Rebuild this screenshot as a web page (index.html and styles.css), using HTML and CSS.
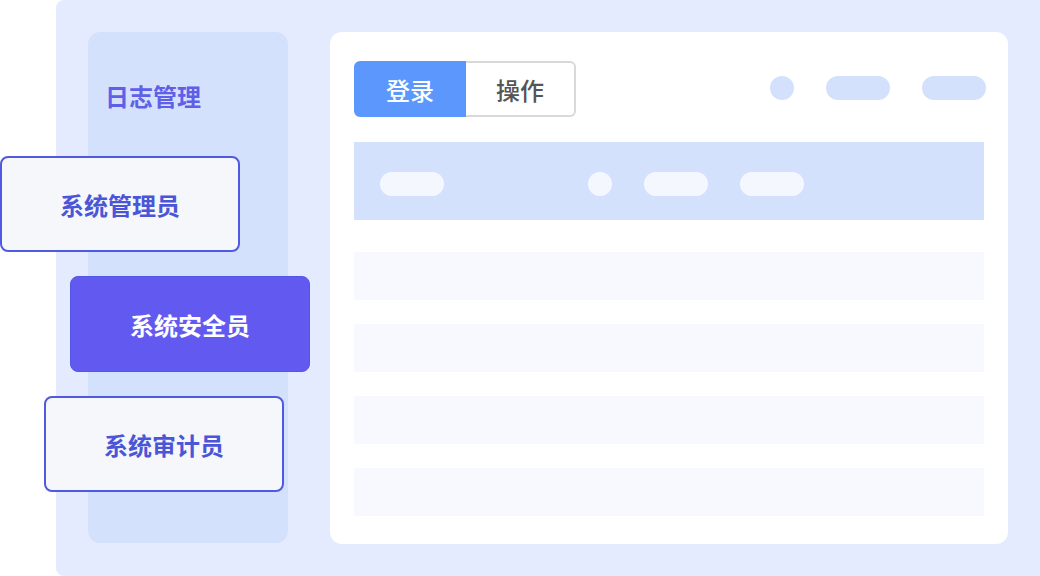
FILE: index.html
```html
<!DOCTYPE html>
<html>
<head>
  <title>日志管理</title>
  <link rel="stylesheet" href="styles.css">
</head>
<body>
  <div class="panel">
    <div class="sidebar">
      <h2 class="sidebar-title">日志管理</h2>
      <div class="role role-admin">系统管理员</div>
      <div class="role role-security active">系统安全员</div>
      <div class="role role-audit">系统审计员</div>
    </div>

    <div class="log-card">
      <div class="toolbar">
        <div class="tabs">
          <button class="tab tab-active">登录</button>
          <button class="tab">操作</button>
        </div>
        <div class="toolbar-dots">
          <span class="dot"></span>
          <span class="pill"></span>
          <span class="pill"></span>
        </div>
      </div>

      <div class="table-head">
        <span class="pill light"></span>
        <span class="dot light spacer"></span>
        <span class="pill light"></span>
        <span class="pill light"></span>
      </div>

      <div class="table-row"></div>
      <div class="table-row"></div>
      <div class="table-row"></div>
      <div class="table-row"></div>
    </div>
  </div>
</body>
</html>
```

FILE: styles.css
```css
body {
  font-family: "Noto Sans CJK SC", "Noto Sans", sans-serif;
  background-color: #fff;
  margin: 0;
  padding: 0;
}

.panel {
  display: flex;
  gap: 42px;
  margin-left: 56px;
  height: 576px;
  box-sizing: border-box;
  padding: 32px 32px 32px 32px;
  background-color: #e5ebfe;
  border-radius: 8px 0 0 8px;
}

.sidebar {
  width: 200px;
  flex-shrink: 0;
  height: 511px;
  padding-top: 48px;
  box-sizing: border-box;
  background-color: #d4e1fd;
  border-radius: 12px;
}

.sidebar-title {
  margin: 0 0 44px 17px;
  font-size: 24px;
  line-height: 32px;
  font-weight: 600;
  color: #5f5fe8;
}

.role {
  width: 240px;
  height: 96px;
  box-sizing: border-box;
  display: flex;
  align-items: center;
  justify-content: center;
  margin-bottom: 24px;
  border: 2px solid #4f5ae0;
  border-radius: 8px;
  background-color: #f5f7fa;
  color: #4b55d8;
  font-size: 24px;
  font-weight: 600;
}

.role-admin {
  margin-left: -88px;
}

.role-security {
  margin-left: -18px;
}

.role-audit {
  margin-left: -44px;
}

.role.active {
  background-color: #625af0;
  border: 1px solid #5257e4;
  color: #fff;
}

.log-card {
  flex: 1;
  padding: 29px 24px 28px 24px;
  background-color: #fff;
  border-radius: 12px;
}

.toolbar {
  display: flex;
  align-items: center;
  justify-content: space-between;
}

.tabs {
  display: flex;
  height: 56px;
}

.tab {
  width: 112px;
  height: 56px;
  border: 2px solid #d9d9d9;
  background-color: #fff;
  color: #555;
  font-family: inherit;
  font-size: 24px;
  font-weight: 500;
  padding: 0;
  cursor: pointer;
}

.tab:first-child {
  border-radius: 6px 0 0 6px;
}

.tab:last-child {
  width: 110px;
  border-left: none;
  border-radius: 0 6px 6px 0;
}

.tab-active {
  background-color: #5b97fd;
  border-color: #5b97fd;
  color: #fff;
}

.toolbar-dots {
  display: flex;
  gap: 32px;
  margin-right: -2px;
  margin-top: -2px;
}

.dot {
  width: 24px;
  height: 24px;
  border-radius: 50%;
  background-color: #d4e1fd;
}

.pill {
  width: 64px;
  height: 24px;
  border-radius: 12px;
  background-color: #d4e1fd;
}

.light {
  background-color: #f4f8fe;
}

.table-head {
  display: flex;
  gap: 32px;
  height: 78px;
  box-sizing: border-box;
  margin-top: 25px;
  padding: 30px 26px 0 26px;
  background-color: #d4e1fd;
}

.spacer {
  margin-left: 112px;
}

.table-row {
  height: 48px;
  margin-top: 24px;
  background-color: #f8f9fe;
}

.table-head + .table-row {
  margin-top: 32px;
}
```
